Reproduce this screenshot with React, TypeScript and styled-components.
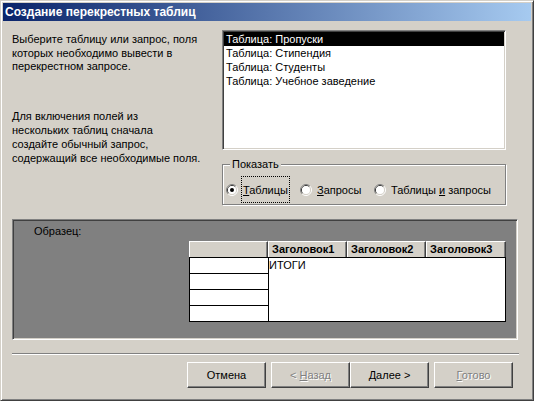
import React from 'react';
import styled, { createGlobalStyle } from 'styled-components';

const GlobalStyle = createGlobalStyle`
  * {
    box-sizing: border-box;
  }
  html, body {
    margin: 0;
    padding: 0;
    background: #d4d0c8;
  }
  body {
    font-family: "Liberation Sans", Arial, sans-serif;
    font-size: 11px;
    color: #000;
  }
`;

const Window = styled.div`
  width: 534px;
  height: 401px;
  display: flex;
  flex-direction: column;
  padding: 2px;
  background: #d4d0c8;
  border: 1px solid;
  border-color: #d4d0c8 #404040 #404040 #d4d0c8;
  box-shadow: inset 1px 1px #fff, inset -1px -1px #808080;
`;

const TitleBar = styled.div`
  height: 18px;
  display: flex;
  align-items: center;
  padding-left: 2px;
  background: linear-gradient(to right, #0a246a, #a6caf0);
  color: #fff;
  font-weight: bold;
  font-size: 12px;
  white-space: nowrap;
`;

const Body = styled.div`
  display: flex;
  flex-direction: column;
  padding: 9px 12px 0 9px;
`;

const Top = styled.div`
  display: flex;
  height: 175px;
`;

const Intro = styled.div`
  width: 210px;
  padding-top: 3px;
`;

const Para = styled.p<{ $lh: number; $gap?: number }>`
  margin: ${(p) => p.$gap ?? 0}px 0 0 0;
  line-height: ${(p) => p.$lh}px;
  white-space: nowrap;
`;

const Side = styled.div`
  width: 284px;
  display: flex;
  flex-direction: column;
`;

const ListBox = styled.div`
  height: 120px;
  background: #fff;
  border: 1px solid;
  border-color: #808080 #fff #fff #808080;
  box-shadow: inset 1px 1px #404040, inset -1px -1px #d4d0c8;
  padding: 1px;
`;

const ListItem = styled.div<{ $selected?: boolean }>`
  height: 14px;
  line-height: 14px;
  padding-left: 2px;
  white-space: nowrap;
  background: ${(p) => (p.$selected ? '#000' : 'transparent')};
  color: ${(p) => (p.$selected ? '#fff' : '#000')};
`;

const GroupBox = styled.div`
  position: relative;
  height: 41px;
  margin-top: 14px;
  border: 1px solid #808080;
  box-shadow: 1px 1px #fff, inset 1px 1px #fff;
  padding: 11px 0 0 3px;
`;

const Legend = styled.span`
  position: absolute;
  top: -7px;
  left: 7px;
  padding: 0 2px;
  line-height: 13px;
  background: #d4d0c8;
`;

const Options = styled.div`
  display: flex;
  height: 27px;
`;

const Option = styled.div<{ $w?: number }>`
  display: flex;
  align-items: center;
  width: ${(p) => (p.$w ? `${p.$w}px` : 'auto')};
`;

const RadioSvg = styled.svg`
  flex: none;
  display: block;
`;

const OptionLabel = styled.span<{ $focus?: boolean }>`
  display: flex;
  align-items: center;
  height: 27px;
  margin-left: 3px;
  padding: 0 1px;
  border: 1px dotted ${(p) => (p.$focus ? '#000' : 'transparent')};
  white-space: nowrap;
`;

const SamplePanel = styled.div`
  width: 506px;
  height: 121px;
  margin-top: 14px;
  background: #808080;
  border: 1px solid;
  border-color: #808080 #fff #fff #808080;
  box-shadow: inset 1px 1px #404040, inset -1px -1px #d4d0c8;
  padding: 5px 11px 0 21px;
  display: flex;
  flex-direction: column;
`;

const SampleLabel = styled.div`
  line-height: 13px;
  color: #000;
`;

const Grid = styled.div`
  display: grid;
  grid-template-columns: 79px 79px 79px 80px;
  grid-template-rows: 16px 65px;
  width: 317px;
  margin: 3px 0 0 auto;
`;

const HeadCell = styled.div`
  background: #d4d0c8;
  border-top: 1px solid #fff;
  border-left: 1px solid #fff;
  border-right: 1px solid #404040;
  box-shadow: inset -1px 0 #808080;
  font-weight: bold;
  line-height: 15px;
  padding-left: 3px;
  white-space: nowrap;
  overflow: hidden;
`;

const RowHeads = styled.div`
  display: flex;
  flex-direction: column;
  background: #fff;
  border-left: 1px solid #000;
  border-bottom: 1px solid #000;
`;

const RowHead = styled.div`
  height: 16px;
  border-top: 1px solid #000;
`;

const Values = styled.div`
  grid-column: 2 / 5;
  background: #fff;
  border: 1px solid #000;
  padding: 1px 0 0 0;
  line-height: 13px;
`;

const Separator = styled.div`
  height: 2px;
  margin-top: 13px;
  border-top: 1px solid #808080;
  border-bottom: 1px solid #fff;
`;

const ButtonRow = styled.div`
  display: flex;
  justify-content: flex-end;
  margin-top: 7px;
  padding-right: 6px;
`;

const Button = styled.button<{ $gap?: number }>`
  width: 79px;
  height: 26px;
  margin-left: ${(p) => p.$gap ?? 0}px;
  padding: 0;
  font-family: "Liberation Sans", Arial, sans-serif;
  font-size: 11px;
  font-weight: 400;
  background: #d4d0c8;
  color: #000;
  border: 1px solid;
  border-color: #fff #404040 #404040 #fff;
  box-shadow: inset -1px -1px #808080;
  &:disabled {
    color: #808080;
    text-shadow: 1px 1px #fff;
  }
`;

function Radio({ checked }: { checked?: boolean }) {
  return (
    <RadioSvg width={12} height={12} viewBox="0 0 12 12">
      <path d="M2.11 9.89 A5.5 5.5 0 0 1 9.89 2.11" stroke="#808080" fill="none" />
      <path d="M9.89 2.11 A5.5 5.5 0 0 1 2.11 9.89" stroke="#fff" fill="none" />
      <path d="M2.82 9.18 A4.5 4.5 0 0 1 9.18 2.82" stroke="#404040" fill="none" />
      <path d="M9.18 2.82 A4.5 4.5 0 0 1 2.82 9.18" stroke="#d4d0c8" fill="none" />
      <circle cx="6" cy="6" r="4" fill="#fff" />
      {checked && <circle cx="6" cy="6" r="2" fill="#000" />}
    </RadioSvg>
  );
}

const tables = [
  'Таблица: Пропуски',
  'Таблица: Стипендия',
  'Таблица: Студенты',
  'Таблица: Учебное заведение',
];

export default function App() {
  return (
    <>
      <GlobalStyle />
      <Window>
        <TitleBar>Создание перекрестных таблиц</TitleBar>
        <Body>
          <Top>
            <Intro>
              <Para $lh={13.5}>
                Выберите таблицу или запрос, поля<br />
                которых необходимо вывести в<br />
                перекрестном запросе.
              </Para>
              <Para $lh={14} $gap={35}>
                Для включения полей из<br />
                нескольких таблиц сначала<br />
                создайте обычный запрос,<br />
                содержащий все необходимые поля.
              </Para>
            </Intro>
            <Side>
              <ListBox>
                {tables.map((t, i) => (
                  <ListItem key={t} $selected={i === 0}>{t}</ListItem>
                ))}
              </ListBox>
              <GroupBox>
                <Legend>Показать</Legend>
                <Options>
                  <Option $w={74}>
                    <Radio checked />
                    <OptionLabel $focus><span><u>Т</u>аблицы</span></OptionLabel>
                  </Option>
                  <Option $w={74}>
                    <Radio />
                    <OptionLabel><span><u>З</u>апросы</span></OptionLabel>
                  </Option>
                  <Option>
                    <Radio />
                    <OptionLabel><span>Таблицы <u>и</u> запросы</span></OptionLabel>
                  </Option>
                </Options>
              </GroupBox>
            </Side>
          </Top>
          <SamplePanel>
            <SampleLabel>Образец:</SampleLabel>
            <Grid>
              <HeadCell />
              <HeadCell>Заголовок1</HeadCell>
              <HeadCell>Заголовок2</HeadCell>
              <HeadCell>Заголовок3</HeadCell>
              <RowHeads>
                <RowHead />
                <RowHead />
                <RowHead />
                <RowHead />
              </RowHeads>
              <Values>ИТОГИ</Values>
            </Grid>
          </SamplePanel>
          <Separator />
          <ButtonRow>
            <Button>Отмена</Button>
            <Button $gap={5} disabled>&lt; <u>Н</u>азад</Button>
            <Button><u>Д</u>алее &gt;</Button>
            <Button $gap={5} disabled><u>Г</u>отово</Button>
          </ButtonRow>
        </Body>
      </Window>
    </>
  );
}
